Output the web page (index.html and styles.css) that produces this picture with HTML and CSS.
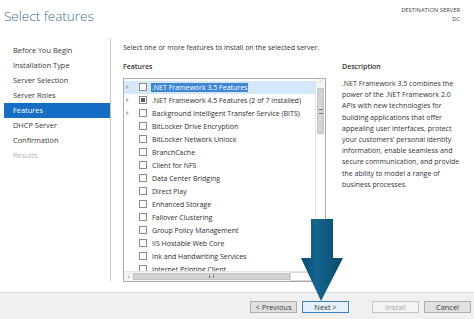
FILE: index.html
```html
<!DOCTYPE html>
<html lang="en">
<head>
    <meta charset="UTF-8">
    <title>Add Roles and Features Wizard</title>
    <link rel="stylesheet" href="styles.css">
</head>
<body>
    <div class="wizard">
        <header class="top">
            <h1 class="title">Select features</h1>
            <div class="dest">
                <div>DESTINATION SERVER</div>
                <div>DC</div>
            </div>
        </header>

        <div class="main">
            <nav class="steps">
                <div class="step">Before You Begin</div>
                <div class="step">Installation Type</div>
                <div class="step">Server Selection</div>
                <div class="step">Server Roles</div>
                <div class="step active">Features</div>
                <div class="step">DHCP Server</div>
                <div class="step">Confirmation</div>
                <div class="step disabled">Results</div>
            </nav>

            <section class="content">
                <p class="intro">Select one or more features to install on the selected server.</p>
                <div class="panes">
                    <div class="features">
                        <h2 class="label">Features</h2>
                        <div class="listbox">
                            <div class="list-body">
                                <ul class="rows">
                                    <li class="row selected"><span class="tri"></span><span class="check"></span><span class="name">.NET Framework 3.5 Features</span></li>
                                    <li class="row"><span class="tri"></span><span class="check partial"></span><span class="name">.NET Framework 4.5 Features (2 of 7 installed)</span></li>
                                    <li class="row"><span class="tri"></span><span class="check"></span><span class="name">Background Intelligent Transfer Service (BITS)</span></li>
                                    <li class="row"><span class="tri none"></span><span class="check"></span><span class="name">BitLocker Drive Encryption</span></li>
                                    <li class="row"><span class="tri none"></span><span class="check"></span><span class="name">BitLocker Network Unlock</span></li>
                                    <li class="row"><span class="tri none"></span><span class="check"></span><span class="name">BranchCache</span></li>
                                    <li class="row"><span class="tri none"></span><span class="check"></span><span class="name">Client for NFS</span></li>
                                    <li class="row"><span class="tri none"></span><span class="check"></span><span class="name">Data Center Bridging</span></li>
                                    <li class="row"><span class="tri none"></span><span class="check"></span><span class="name">Direct Play</span></li>
                                    <li class="row"><span class="tri none"></span><span class="check"></span><span class="name">Enhanced Storage</span></li>
                                    <li class="row"><span class="tri none"></span><span class="check"></span><span class="name">Failover Clustering</span></li>
                                    <li class="row"><span class="tri none"></span><span class="check"></span><span class="name">Group Policy Management</span></li>
                                    <li class="row"><span class="tri none"></span><span class="check"></span><span class="name">IIS Hostable Web Core</span></li>
                                    <li class="row"><span class="tri none"></span><span class="check"></span><span class="name">Ink and Handwriting Services</span></li>
                                    <li class="row"><span class="tri none"></span><span class="check"></span><span class="name">Internet Printing Client</span></li>
                                </ul>
                                <div class="vscroll">
                                    <div class="sb-btn">&#708;</div>
                                    <div class="vthumb"><span class="grip-h"></span></div>
                                </div>
                            </div>
                            <div class="hscroll">
                                <div class="sb-btn">&lsaquo;</div>
                                <div class="hthumb"><span class="grip-v"></span></div>
                                <div class="htrack"></div>
                                <div class="corner"></div>
                            </div>
                        </div>
                    </div>

                    <div class="description">
                        <h2 class="label">Description</h2>
                        <p>.NET Framework 3.5 combines the power of the .NET Framework 2.0 APIs with new technologies for building applications that offer appealing user interfaces, protect your customers' personal identity information, enable seamless and secure communication, and provide the ability to model a range of business processes.</p>
                    </div>
                </div>
            </section>
        </div>

        <footer class="buttons">
            <button class="btn">&lt; Previous</button>
            <button class="btn primary">Next &gt;</button>
            <button class="btn install" disabled>Install</button>
            <button class="btn">Cancel</button>
        </footer>
    </div>

    <!-- callout arrow pointing at the Next button -->
    <svg class="arrow" width="44" height="84" viewBox="0 0 44 84">
        <defs>
            <linearGradient id="shaft" x1="0" x2="1" y1="0" y2="0">
                <stop offset="0" stop-color="#0a4a6c"/>
                <stop offset="0.35" stop-color="#14658e"/>
                <stop offset="1" stop-color="#0a4a6c"/>
            </linearGradient>
        </defs>
        <polygon points="10,0 32,0 32,39 42,39 20,82 0,39 10,39" fill="url(#shaft)"/>
    </svg>
</body>
</html>
```

FILE: styles.css
```css
body {
    margin: 0;
    background: #fff;
    font-family: 'Open Sans', 'Noto Sans', sans-serif;
    font-size: 7px;
    color: #333;
}

.wizard {
    width: 474px;
    height: 319px;
    display: flex;
    flex-direction: column;
    overflow: hidden;
}

/* header */
.top {
    height: 38px;
    display: flex;
    justify-content: space-between;
    align-items: flex-start;
}

.title {
    margin: 6px 0 0 4px;
    font-size: 13.5px;
    font-weight: 300;
    color: #3f6e8c;
    line-height: 20px;
}

.dest {
    margin: 6px 14px 0 0;
    text-align: right;
    font-size: 5.8px;
    line-height: 9px;
    color: #444;
}

/* body */
.main {
    flex: 1;
    display: flex;
}

.steps {
    width: 106px;
    padding: 5px 0 0 4px;
    margin-bottom: 11px;
    border-right: 1px solid #c9c9c9;
}

.step {
    height: 15px;
    line-height: 15px;
    padding-left: 9px;
    font-size: 7.4px;
    color: #3a3a3a;
}

.step.active {
    background: #166dc4;
    color: #fff;
}

.step.disabled {
    color: #b4b4b4;
}

.content {
    flex: 1;
    padding: 5px 0 0 12px;
}

.intro {
    margin: 0;
    line-height: 10px;
    font-size: 7px;
}

.panes {
    display: flex;
    gap: 16px;
    margin-top: 9px;
}

.label {
    margin: 0 0 6px;
    font-size: 7px;
    font-weight: 600;
    line-height: 10px;
    color: #333;
}

.features {
    width: 203px;
}

.listbox {
    height: 202px;
    border: 1px solid #acacac;
    display: flex;
    flex-direction: column;
}

.list-body {
    flex: 1;
    display: flex;
    overflow: hidden;
}

.rows {
    flex: 1;
    list-style: none;
    margin: 0;
    padding: 1.5px 0 0;
    overflow: hidden;
}

.row {
    height: 13px;
    display: flex;
    align-items: center;
    white-space: nowrap;
    font-size: 7px;
    color: #2e2e2e;
}

.row.selected {
    background: #d3e8fb;
}

.tri {
    width: 0;
    height: 0;
    margin: 0 10px 0 2px;
    border-top: 2.5px solid transparent;
    border-bottom: 2.5px solid transparent;
    border-left: 3px solid #b3b3b3;
}

.tri.none {
    border-left-color: transparent;
}

.check {
    width: 6px;
    height: 6px;
    border: 1px solid #8c8c8c;
    background: #fff;
    margin-right: 4px;
    display: flex;
    align-items: center;
    justify-content: center;
}

.check.partial::after {
    content: "";
    width: 4px;
    height: 4px;
    background: #5c5c5c;
}

.name {
    line-height: 9px;
    padding: 0 1px;
}

.selected .name {
    background: #3f87d6;
    color: #fff;
}

.vscroll {
    width: 9px;
    border-left: 1px solid #e3e3e3;
    background: #fff;
    display: flex;
    flex-direction: column;
}

.sb-btn {
    height: 9px;
    width: 9px;
    font-size: 7px;
    line-height: 9px;
    text-align: center;
    color: #8a8a8a;
    background: #f4f4f4;
    flex-shrink: 0;
}

.vthumb {
    height: 44px;
    margin: 0 1px;
    background: #d4d4d4;
    border: 1px solid #c4c4c4;
    display: flex;
    align-items: center;
    justify-content: center;
}

.grip-h {
    width: 4px;
    height: 3px;
    border-top: 1px solid #777;
    border-bottom: 1px solid #777;
}

.hscroll {
    height: 9px;
    display: flex;
    border-top: 1px solid #e3e3e3;
    background: #f4f4f4;
}

.hthumb {
    width: 155px;
    margin: 1px 0;
    background: #d4d4d4;
    border: 1px solid #c4c4c4;
    display: flex;
    align-items: center;
    justify-content: center;
}

.grip-v {
    width: 3px;
    height: 3px;
    border-left: 1px solid #777;
    border-right: 1px solid #777;
}

.htrack {
    flex: 1;
    background: #fff;
    border: 1px solid #d8d8d8;
}

.corner {
    width: 10px;
    background: #fff;
}

.description {
    width: 123px;
}

.description p {
    margin: 0;
    line-height: 11.2px;
    font-size: 7px;
    color: #333;
}

/* footer */
.buttons {
    height: 27px;
    box-sizing: border-box;
    background: #f0f0f0;
    border-top: 1px solid #dadada;
    display: flex;
    justify-content: flex-end;
    align-items: flex-start;
    padding: 8px 3px 0 0;
    gap: 5px;
}

.btn {
    width: 47px;
    height: 12px;
    padding: 0;
    font-family: inherit;
    font-size: 7.4px;
    line-height: 10px;
    color: #333;
    background: #e1e1e1;
    border: 1px solid #adadad;
}

.btn.primary {
    background: #e5f1fb;
    border-color: #3c7fb1;
}

.btn.install {
    margin-left: 18px;
    background: #f4f4f4;
    border-color: #c6c6c6;
    color: #a6a6a6;
}

.arrow {
    position: absolute;
    left: 301px;
    top: 219px;
}
```
